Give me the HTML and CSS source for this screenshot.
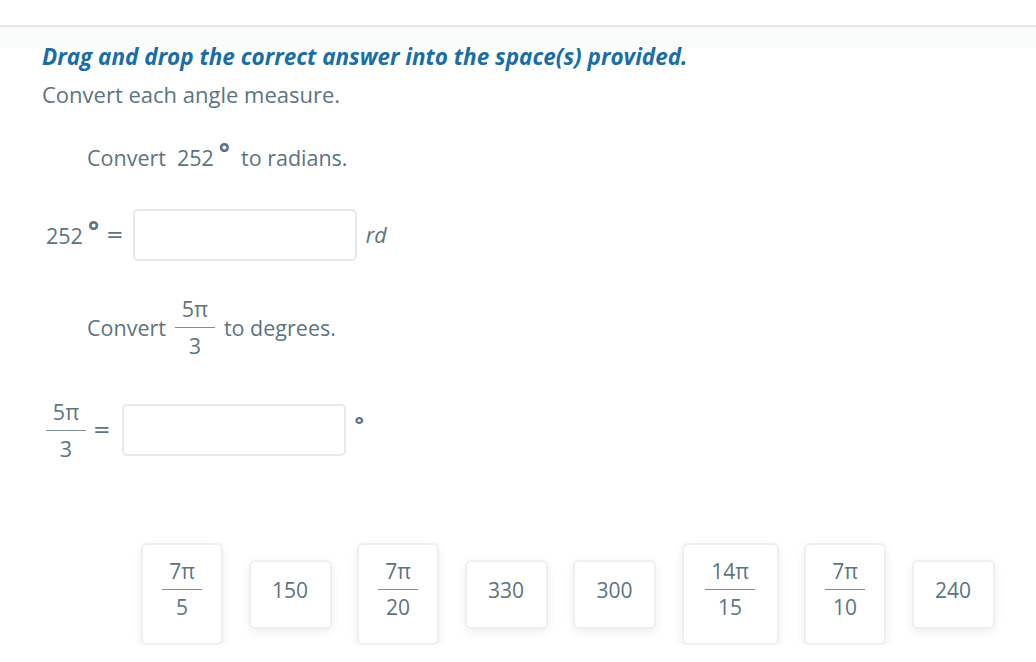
FILE: index.html
```html
<!DOCTYPE html>
<html>
<head>
<meta charset="utf-8">
<link rel="stylesheet" href="styles.css">
</head>
<body>
<div class="topbar"></div>
<div class="band"></div>
<main class="content">
  <h1 class="title">Drag and drop the correct answer into the space(s) provided.</h1>
  <p class="instr">Convert each angle measure.</p>

  <div class="question q1">
    <span>Convert</span>
    <span class="math">252<span class="deg">°</span></span>
    <span>to radians.</span>
  </div>
  <div class="answer a1">
    <span class="math">252<span class="deg">°</span></span>
    <span class="eq">=</span>
    <div class="drop"></div>
    <span class="unit">rd</span>
  </div>

  <div class="question q2">
    <span>Convert</span>
    <span class="frac"><span class="num">5π</span><span class="den">3</span></span>
    <span>to degrees.</span>
  </div>
  <div class="answer a2">
    <span class="frac"><span class="num">5π</span><span class="den">3</span></span>
    <span class="eq">=</span>
    <div class="drop"></div>
    <span class="unitdeg">°</span>
  </div>

  <div class="tiles">
    <div class="tile tall"><span class="frac"><span class="num">7π</span><span class="den">5</span></span></div>
    <div class="tile">150</div>
    <div class="tile tall"><span class="frac"><span class="num">7π</span><span class="den">20</span></span></div>
    <div class="tile">330</div>
    <div class="tile">300</div>
    <div class="tile tall wide"><span class="frac"><span class="num">14π</span><span class="den">15</span></span></div>
    <div class="tile tall"><span class="frac"><span class="num">7π</span><span class="den">10</span></span></div>
    <div class="tile">240</div>
  </div>
</main>
</body>
</html>
```

FILE: styles.css
```css
* { box-sizing: border-box; }
body {
  margin: 0;
  background: #ffffff;
  font-family: "Open Sans", "Noto Sans", sans-serif;
  color: #5d7480;
}
.topbar {
  height: 27px;
  border-bottom: 2px solid #e8e8e8;
}
.band {
  height: 21px;
  background: #fafcfc;
}
.content {
  padding: 0 0 0 42px;
}
.title {
  margin: -5px 0 0 0;
  height: 28px;
  font-size: 22.5px;
  line-height: 28px;
  font-weight: 700;
  font-style: italic;
  color: #1b6ea3;
}
.instr {
  margin: 8px 0 0 0;
  height: 30px;
  font-size: 22px;
  line-height: 30px;
}
.question {
  display: flex;
  align-items: center;
  font-size: 21.5px;
  margin-left: 45px;
}
.q1 { margin-top: 33px; height: 30px; gap: 11px; }
.q2 { margin-top: 37px; height: 58px; gap: 9px; }
.math { white-space: nowrap; }
.deg {
  display: inline-block;
  font-size: 26px;
  font-weight: 700;
  line-height: 0;
  margin-left: 5px;
  transform: translateY(-4px);
}
.answer {
  display: flex;
  align-items: center;
  font-size: 21.5px;
  margin-left: 4px;
  height: 52px;
}
.a1 { margin-top: 37px; }
.a2 { margin-top: 48px; }
.eq {
  font-family: "DejaVu Sans", sans-serif;
  font-size: 21px;
  line-height: 1;
  margin: 0 9px 0 7px;
}
.a2 .eq { margin-left: 7px; margin-right: 11px; }
.drop {
  width: 224px;
  height: 52px;
  border: 2px solid #e8e8e8;
  border-radius: 5px;
  background: #fff;
}
.unit {
  font-style: italic;
  margin-left: 9px;
  margin-top: -2px;
}
.unitdeg {
  margin-left: 9px;
  margin-top: -14px;
  font-size: 22px;
  font-weight: 700;
}
.frac {
  display: inline-flex;
  flex-direction: column;
  align-items: center;
  line-height: 1;
}
.frac .num {
  padding: 0 4px 7px;
  border-bottom: 1.5px solid #7b8f99;
  min-width: 40px;
  text-align: center;
}
.frac .den {
  padding-top: 7px;
}
.tiles {
  display: flex;
  align-items: center;
  gap: 25.5px;
  margin: 87px 0 0 99px;
}
.tile {
  width: 83px;
  height: 69px;
  padding-bottom: 8px;
  display: flex;
  align-items: center;
  justify-content: center;
  border: 2px solid #efefef;
  border-radius: 6px;
  background: #fff;
  box-shadow: 0 3px 10px rgba(0, 0, 0, 0.07);
  font-size: 21px;
}
.tile.tall { width: 82px; height: 102px; padding-bottom: 10px; }
.tile.wide { width: 97px; }
.tile .frac .num { min-width: 40px; }
.tile.wide .frac .num { min-width: 50px; }
```
